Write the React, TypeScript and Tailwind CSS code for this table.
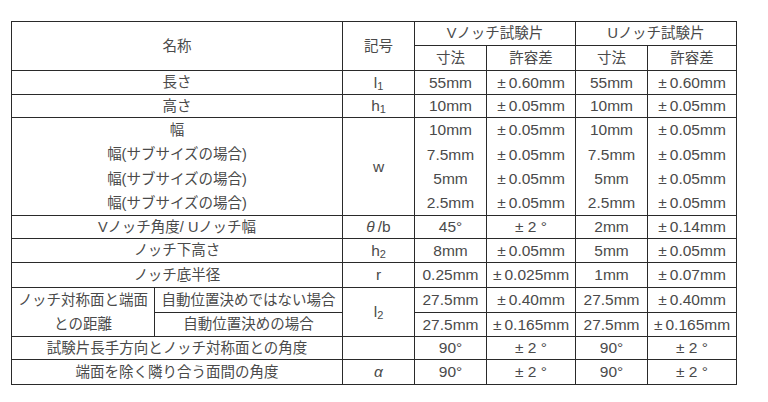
import React from "react";

const cell = "border border-[#2a2a2a] text-center align-middle p-0 whitespace-nowrap";
// numeric cells use a slightly larger Latin size, as in the source document
const num = `${cell} text-[15.5px]`;
// cells inside the 幅 block: no lines between the stacked rows
const noTop = "border-t-0";
const noBottom = "border-b-0";

function Sub({ children }: { children: React.ReactNode }) {
  return <span className="text-[11px] relative top-[2px]">{children}</span>;
}

type Row = { name: string; v: string; vt: string; u: string; ut: string };

const pm = (s: string) => s.replace("±", "±\u2009");

const widthRows: Row[] = [
  { name: "幅", v: "10mm", vt: "±0.05mm", u: "10mm", ut: "±0.05mm" },
  { name: "幅(サブサイズの場合)", v: "7.5mm", vt: "±0.05mm", u: "7.5mm", ut: "±0.05mm" },
  { name: "幅(サブサイズの場合)", v: "5mm", vt: "±0.05mm", u: "5mm", ut: "±0.05mm" },
  { name: "幅(サブサイズの場合)", v: "2.5mm", vt: "±0.05mm", u: "2.5mm", ut: "±0.05mm" },
];

export default function App() {
  return (
    <div
      className="w-[768px] h-[402px] bg-white pt-[21px] pl-[11px] text-[#4a4a4a] text-[14.5px]"
      style={{ fontFamily: '"Liberation Sans", "Noto Sans CJK JP", sans-serif' }}
    >
      <table className="border-collapse table-fixed w-[725px] leading-none">
        <colgroup>
          <col className="w-[143px]" />
          <col className="w-[188px]" />
          <col className="w-[72px]" />
          <col className="w-[72px]" />
          <col className="w-[89px]" />
          <col className="w-[72px]" />
          <col className="w-[89px]" />
        </colgroup>
        <tbody>
          <tr className="h-[24px]">
            <td className={cell} colSpan={2} rowSpan={2}>名称</td>
            <td className={cell} rowSpan={2}>記号</td>
            <td className={cell} colSpan={2}>Vノッチ試験片</td>
            <td className={cell} colSpan={2}>Uノッチ試験片</td>
          </tr>
          <tr className="h-[25px]">
            <td className={cell}>寸法</td>
            <td className={cell}>許容差</td>
            <td className={cell}>寸法</td>
            <td className={cell}>許容差</td>
          </tr>
          <tr className="h-[24px]">
            <td className={cell} colSpan={2}>長さ</td>
            <td className={num}>l<Sub>1</Sub></td>
            <td className={num}>55mm</td>
            <td className={num}>{pm("±0.60mm")}</td>
            <td className={num}>55mm</td>
            <td className={num}>{pm("±0.60mm")}</td>
          </tr>
          <tr className="h-[23px]">
            <td className={cell} colSpan={2}>高さ</td>
            <td className={num}>h<Sub>1</Sub></td>
            <td className={num}>10mm</td>
            <td className={num}>{pm("±0.05mm")}</td>
            <td className={num}>10mm</td>
            <td className={num}>{pm("±0.05mm")}</td>
          </tr>
          {widthRows.map((r, i) => {
            const edge = `${i > 0 ? noTop : ""} ${i < 3 ? noBottom : ""}`;
            return (
              <tr key={i} className="h-[24.5px]">
                <td className={`${cell} ${edge}`} colSpan={2}>{r.name}</td>
                {i === 0 && (
                  <td className={num} rowSpan={4}>w</td>
                )}
                <td className={`${num} ${edge}`}>{r.v}</td>
                <td className={`${num} ${edge}`}>{pm(r.vt)}</td>
                <td className={`${num} ${edge}`}>{r.u}</td>
                <td className={`${num} ${edge}`}>{pm(r.ut)}</td>
              </tr>
            );
          })}
          <tr className="h-[23px]">
            <td className={cell} colSpan={2}>Vノッチ角度/ Uノッチ幅</td>
            <td className={num}><i>θ</i>&thinsp;/b</td>
            <td className={num}>45°</td>
            <td className={num}>± 2 °</td>
            <td className={num}>2mm</td>
            <td className={num}>{pm("±0.14mm")}</td>
          </tr>
          <tr className="h-[24px]">
            <td className={cell} colSpan={2}>ノッチ下高さ</td>
            <td className={num}>h<Sub>2</Sub></td>
            <td className={num}>8mm</td>
            <td className={num}>{pm("±0.05mm")}</td>
            <td className={num}>5mm</td>
            <td className={num}>{pm("±0.05mm")}</td>
          </tr>
          <tr className="h-[25px]">
            <td className={cell} colSpan={2}>ノッチ底半径</td>
            <td className={num}>r</td>
            <td className={num}>0.25mm</td>
            <td className={num}>{pm("±0.025mm")}</td>
            <td className={num}>1mm</td>
            <td className={num}>{pm("±0.07mm")}</td>
          </tr>
          <tr className="h-[25px]">
            <td className={`${cell} leading-[24px]`} rowSpan={2}>
              ノッチ対称面と端面
              <br />
              との距離
            </td>
            <td className={cell}>自動位置決めではない場合</td>
            <td className={num} rowSpan={2}>l<Sub>2</Sub></td>
            <td className={num}>27.5mm</td>
            <td className={num}>{pm("±0.40mm")}</td>
            <td className={num}>27.5mm</td>
            <td className={num}>{pm("±0.40mm")}</td>
          </tr>
          <tr className="h-[24px]">
            <td className={cell}>自動位置決めの場合</td>
            <td className={num}>27.5mm</td>
            <td className={num}>{pm("±0.165mm")}</td>
            <td className={num}>27.5mm</td>
            <td className={num}>{pm("±0.165mm")}</td>
          </tr>
          <tr className="h-[23px]">
            <td className={cell} colSpan={2}>試験片長手方向とノッチ対称面との角度</td>
            <td className={num}></td>
            <td className={num}>90°</td>
            <td className={num}>± 2 °</td>
            <td className={num}>90°</td>
            <td className={num}>± 2 °</td>
          </tr>
          <tr className="h-[25px]">
            <td className={cell} colSpan={2}>端面を除く隣り合う面間の角度</td>
            <td className={num}><i>α</i></td>
            <td className={num}>90°</td>
            <td className={num}>± 2 °</td>
            <td className={num}>90°</td>
            <td className={num}>± 2 °</td>
          </tr>
        </tbody>
      </table>
    </div>
  );
}
